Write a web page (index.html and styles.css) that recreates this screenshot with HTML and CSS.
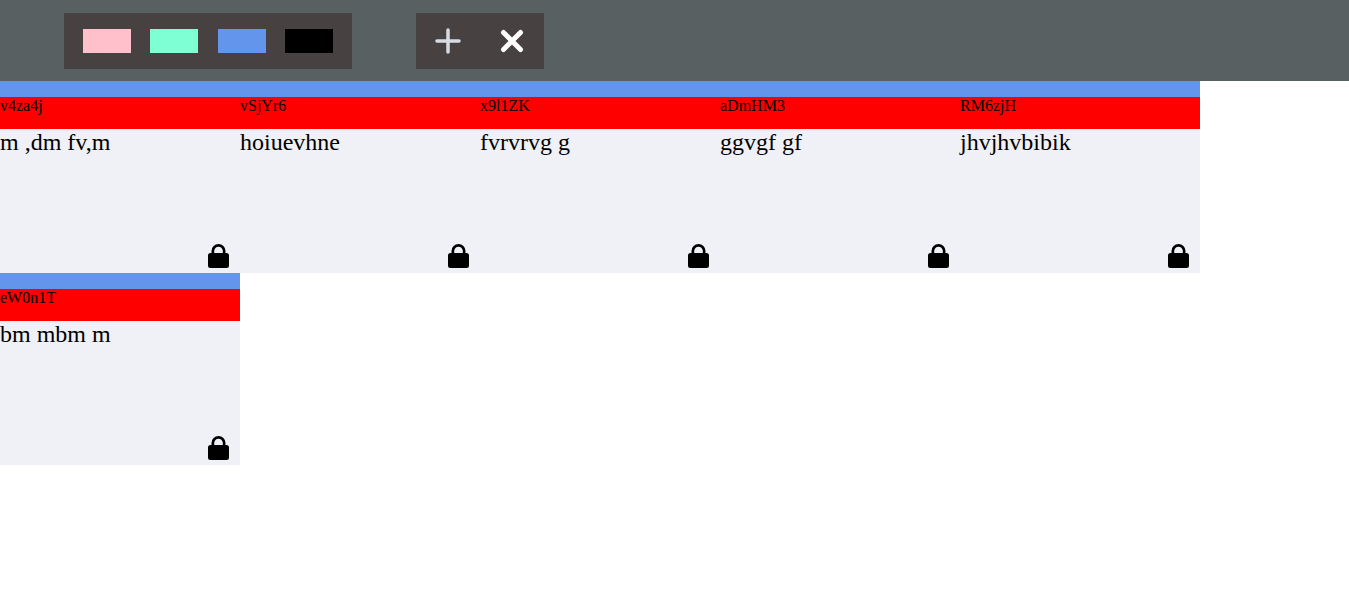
FILE: index.html
```html
<!DOCTYPE html>
<html lang="en">
<head>
    <meta charset="UTF-8">
    <meta name="viewport" content="width=device-width, initial-scale=1.0">
    <title>Notes</title>
    <link rel="stylesheet" href="styles.css">
</head>
<body>
    <header class="toolbar">
        <div class="palette">
            <span class="swatch swatch-pink"></span>
            <span class="swatch swatch-mint"></span>
            <span class="swatch swatch-blue"></span>
            <span class="swatch swatch-black"></span>
        </div>
        <div class="actions">
            <button class="action" aria-label="Add">
                <svg class="icon-plus" viewBox="0 0 28 28"><path d="M14 3v22M3 14h22"/></svg>
            </button>
            <button class="action" aria-label="Delete">
                <svg class="icon-close" viewBox="0 0 24 24"><path d="M3.500 3.500l17 17M20.500 3.500l-17 17"/></svg>
            </button>
        </div>
    </header>

    <main class="notes">
        <article class="note">
            <div class="note-bar"></div>
            <div class="note-id">v4za4j</div>
            <div class="note-body">
                <p class="note-text">m ,dm fv,m</p>
                <svg class="lock" viewBox="0 0 21 24"><path d="M3.500 9V7a7 7 0 0 1 14 0v2h1A2.500 2.500 0 0 1 21 11.500v10a2.500 2.500 0 0 1-2.500 2.500h-16A2.500 2.500 0 0 1 0 21.500v-10A2.500 2.500 0 0 1 2.500 9zM6.200 9h8.600V7a4.300 4.300 0 0 0-8.600 0z"/></svg>
            </div>
        </article>
        <article class="note">
            <div class="note-bar"></div>
            <div class="note-id">vSjYr6</div>
            <div class="note-body">
                <p class="note-text">hoiuevhne</p>
                <svg class="lock" viewBox="0 0 21 24"><path d="M3.500 9V7a7 7 0 0 1 14 0v2h1A2.500 2.500 0 0 1 21 11.500v10a2.500 2.500 0 0 1-2.500 2.500h-16A2.500 2.500 0 0 1 0 21.500v-10A2.500 2.500 0 0 1 2.500 9zM6.200 9h8.600V7a4.300 4.300 0 0 0-8.600 0z"/></svg>
            </div>
        </article>
        <article class="note">
            <div class="note-bar"></div>
            <div class="note-id">x9l1ZK</div>
            <div class="note-body">
                <p class="note-text">fvrvrvg g</p>
                <svg class="lock" viewBox="0 0 21 24"><path d="M3.500 9V7a7 7 0 0 1 14 0v2h1A2.500 2.500 0 0 1 21 11.500v10a2.500 2.500 0 0 1-2.500 2.500h-16A2.500 2.500 0 0 1 0 21.500v-10A2.500 2.500 0 0 1 2.500 9zM6.200 9h8.600V7a4.300 4.300 0 0 0-8.600 0z"/></svg>
            </div>
        </article>
        <article class="note">
            <div class="note-bar"></div>
            <div class="note-id">aDmHM3</div>
            <div class="note-body">
                <p class="note-text">ggvgf gf</p>
                <svg class="lock" viewBox="0 0 21 24"><path d="M3.500 9V7a7 7 0 0 1 14 0v2h1A2.500 2.500 0 0 1 21 11.500v10a2.500 2.500 0 0 1-2.500 2.500h-16A2.500 2.500 0 0 1 0 21.500v-10A2.500 2.500 0 0 1 2.500 9zM6.200 9h8.600V7a4.300 4.300 0 0 0-8.600 0z"/></svg>
            </div>
        </article>
        <article class="note">
            <div class="note-bar"></div>
            <div class="note-id">RM6zjH</div>
            <div class="note-body">
                <p class="note-text">jhvjhvbibik</p>
                <svg class="lock" viewBox="0 0 21 24"><path d="M3.500 9V7a7 7 0 0 1 14 0v2h1A2.500 2.500 0 0 1 21 11.500v10a2.500 2.500 0 0 1-2.500 2.500h-16A2.500 2.500 0 0 1 0 21.500v-10A2.500 2.500 0 0 1 2.500 9zM6.200 9h8.600V7a4.300 4.300 0 0 0-8.600 0z"/></svg>
            </div>
        </article>
        <article class="note">
            <div class="note-bar"></div>
            <div class="note-id">eW0n1T</div>
            <div class="note-body">
                <p class="note-text">bm mbm m</p>
                <svg class="lock" viewBox="0 0 21 24"><path d="M3.500 9V7a7 7 0 0 1 14 0v2h1A2.500 2.500 0 0 1 21 11.500v10a2.500 2.500 0 0 1-2.500 2.500h-16A2.500 2.500 0 0 1 0 21.500v-10A2.500 2.500 0 0 1 2.500 9zM6.200 9h8.600V7a4.300 4.300 0 0 0-8.600 0z"/></svg>
            </div>
        </article>
    </main>
</body>
</html>
```

FILE: styles.css
```css
body {
    margin: 0;
    padding: 0;
    background-color: #fff;
    color: #000;
    font-family: "Liberation Serif", serif;
}

.toolbar {
    display: flex;
    align-items: center;
    gap: 64px;
    height: 81px;
    padding-left: 64px;
    background-color: #586062;
}

.palette {
    display: flex;
    justify-content: space-evenly;
    align-items: center;
    width: 288px;
    height: 56px;
    background-color: #474241;
}

.swatch {
    width: 48px;
    height: 24px;
}

.swatch-pink { background-color: #ffc0cb; }
.swatch-mint { background-color: #7fffd4; }
.swatch-blue { background-color: #6495ed; }
.swatch-black { background-color: #000; }

.actions {
    display: flex;
    height: 56px;
    background-color: #474241;
}

.action {
    display: flex;
    justify-content: center;
    align-items: center;
    width: 64px;
    padding: 0;
    border: none;
    background: none;
}

.icon-plus {
    width: 28px;
    height: 28px;
    fill: none;
    stroke: #d6dbe4;
    stroke-width: 3.5;
    stroke-linecap: round;
}

.icon-close {
    width: 24px;
    height: 24px;
    fill: none;
    stroke: #fff;
    stroke-width: 5;
    stroke-linecap: round;
}

.notes {
    display: grid;
    grid-template-columns: repeat(5, 240px);
}

.note {
    display: flex;
    flex-direction: column;
    height: 192px;
}

.note-bar {
    height: 16px;
    background-color: #6495ed;
}

.note-id {
    height: 32px;
    background-color: #f00;
    font-size: 16px;
    line-height: 18px;
}

.note-body {
    display: flex;
    flex: 1;
    flex-direction: column;
    justify-content: space-between;
    background-color: #f0f1f6;
}

.note-text {
    margin: 0;
    font-size: 24px;
    line-height: 26px;
}

.lock {
    align-self: flex-end;
    width: 21px;
    height: 24px;
    margin: 0 11px 5px 0;
}
```
